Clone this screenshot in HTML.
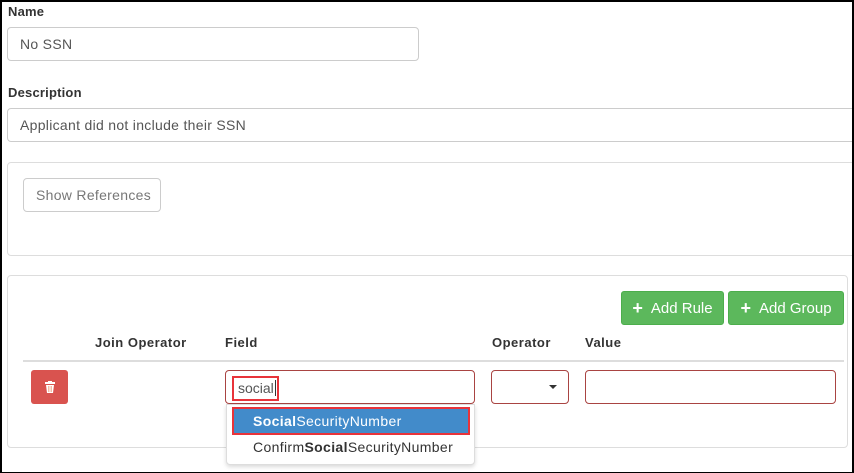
<!DOCTYPE html>
<html><head><style>
*{box-sizing:border-box;margin:0;padding:0}
body{width:854px;height:473px;overflow:hidden;background:#fff;font-family:"Liberation Sans",sans-serif;color:#333;position:relative}
.frame{position:absolute;left:0;top:0;width:854px;height:473px;border:2px solid #000;border-bottom:1px solid #000;z-index:10;pointer-events:none}
.a{position:absolute}
.lbl{font-weight:bold;font-size:13px;color:#333;letter-spacing:.2px}
.inp{border:1px solid #ccc;border-radius:4px;font-size:14px;color:#555;padding-left:12px;display:flex;align-items:center;letter-spacing:.3px}
.th{font-weight:bold;font-size:13px;color:#333;letter-spacing:.5px}
.err{border:1px solid #a94442;border-radius:4px}
.btn{background:#5cb85c;border:1px solid #4cae4c;border-radius:3px;color:#fff;font-size:15px;display:flex;align-items:center;justify-content:center}
</style></head><body>
<div class="frame"></div>
<div class="a lbl" style="left:8px;top:4px">Name</div>
<div class="a inp" style="left:7px;top:27px;width:412px;height:34px">No SSN</div>
<div class="a lbl" style="left:8px;top:85px">Description</div>
<div class="a inp" style="left:7px;top:108px;width:860px;height:34px">Applicant did not include their SSN</div>
<div class="a" style="left:7px;top:162px;width:860px;height:94px;border:1px solid #ddd;border-radius:4px"></div>
<div class="a inp" style="left:23px;top:178px;width:138px;height:34px;color:#777;padding-left:12px">Show References</div>
<div class="a" style="left:7px;top:275px;width:841px;height:173px;border:1px solid #ddd;border-radius:4px"></div>
<div class="a btn" style="left:621px;top:291px;width:103px;height:34px"><b style="font-size:18px;margin-right:8px">+</b>Add Rule</div>
<div class="a btn" style="left:728px;top:291px;width:116px;height:34px"><b style="font-size:18px;margin-right:8px">+</b>Add Group</div>
<div class="a th" style="left:95px;top:335px">Join Operator</div>
<div class="a th" style="left:225px;top:335px">Field</div>
<div class="a th" style="left:492px;top:335px">Operator</div>
<div class="a th" style="left:585px;top:335px">Value</div>
<div class="a" style="left:23px;top:360px;width:821px;height:2px;background:#ddd"></div>
<div class="a" style="left:31px;top:370px;width:37px;height:34px;background:#d9534f;border-radius:3px;display:flex;align-items:center;justify-content:center">
<svg width="10" height="12" viewBox="0 0 10 12"><rect x="0" y="1" width="10" height="2" fill="#fff"/><rect x="3" y="0" width="4" height="2" fill="#fff"/><path d="M1 4h8l-1 8H2z" fill="#fff"/><path d="M3.5 5v6M5 5v6M6.5 5v6" stroke="#f0a080" stroke-width=".7"/></svg></div>
<div class="a err" style="left:225px;top:370px;width:250px;height:34px"></div>
<div class="a" style="left:232px;top:376px;width:47px;height:25px;border:2px solid #e8333a;background:#fff;font-size:14px;color:#555;padding-left:4px;line-height:21px">social<span style="border-left:1px solid #333;margin-left:1px"></span></div>
<div class="a err" style="left:491px;top:370px;width:78px;height:34px"><div style="position:absolute;left:57px;top:14px;border-left:4px solid transparent;border-right:4px solid transparent;border-top:4px solid #333"></div></div>
<div class="a err" style="left:585px;top:370px;width:251px;height:34px"></div>
<div class="a" style="left:226px;top:404px;width:249px;height:61px;background:#fff;border:1px solid #ddd;border-radius:0 0 4px 4px;box-shadow:0 2px 4px rgba(0,0,0,.15)"></div>
<div class="a" style="left:232px;top:407px;width:238px;height:28px;border:2px solid #e8333a;background:#428bca;color:#fff;font-size:14px;padding-left:19px;line-height:24px;letter-spacing:.35px"><b>Social</b>SecurityNumber</div>
<div class="a" style="left:253px;top:438px;font-size:14px;color:#333;line-height:18px;letter-spacing:.35px">Confirm<b>Social</b>SecurityNumber</div>
</body></html>
